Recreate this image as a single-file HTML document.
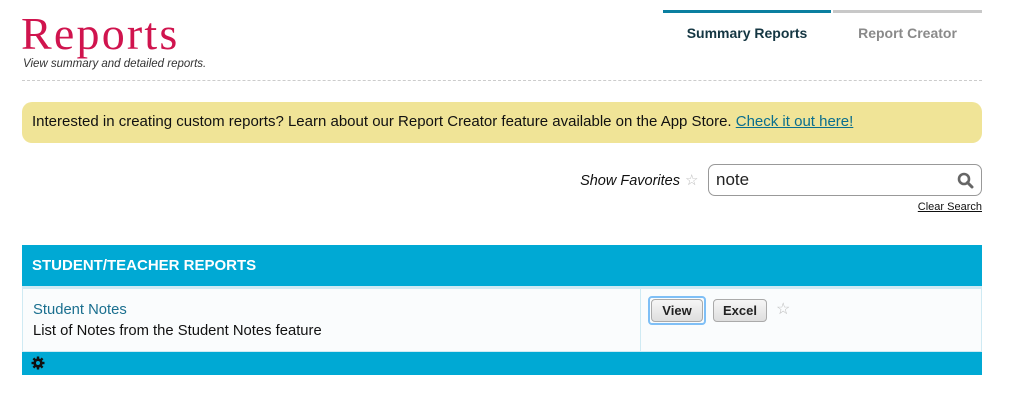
<!DOCTYPE html>
<html><head><meta charset="utf-8"><style>
*{margin:0;padding:0;box-sizing:border-box}
body{width:1009px;height:410px;background:#fff;font-family:"Liberation Sans",sans-serif;position:relative;overflow:hidden;color:#111}
.a{position:absolute}
</style></head><body>
<div class="a" style="left:21px;top:7px;font-family:'Liberation Serif',serif;font-size:46px;color:#d0144e;letter-spacing:2.2px">Reports</div>
<div class="a" style="left:23px;top:58px;font-size:11.5px;font-style:italic;color:#333">View summary and detailed reports.</div>
<div class="a" style="left:22px;top:80px;width:960px;border-top:1px dashed #ccc"></div>

<div class="a" style="left:663px;top:10px;width:168px;height:3px;background:#0a7fa0"></div>
<div class="a" style="left:833px;top:10px;width:149px;height:3px;background:#c8c8c8"></div>
<div class="a" style="left:663px;top:25px;width:168px;text-align:center;font-size:14px;font-weight:bold;color:#143642">Summary Reports</div>
<div class="a" style="left:833px;top:25px;width:149px;text-align:center;font-size:14px;font-weight:bold;color:#8a8a8a">Report Creator</div>

<div class="a" style="left:22px;top:102px;width:960px;height:41px;background:#f0e497;border-radius:10px"></div>
<div class="a" style="left:32px;top:113px;font-size:15px;color:#111">Interested in creating custom reports? Learn about our Report Creator feature available on the App Store. <span style="color:#0a6e8e;text-decoration:underline">Check it out here!</span></div>

<div class="a" style="left:560px;top:173px;width:120px;text-align:right;font-size:14.5px;font-style:italic;color:#111">Show Favorites</div>
<div class="a" style="left:685px;top:171px;font-size:15px;color:#bbb">☆</div>
<div class="a" style="left:708px;top:164px;width:274px;height:32px;border:1px solid #999;border-radius:7px"></div>
<div class="a" style="left:716px;top:170px;font-size:17px;color:#222">note</div>
<svg class="a" style="left:957px;top:172px" width="17" height="17" viewBox="0 0 17 17"><circle cx="7" cy="7" r="5" fill="none" stroke="#666" stroke-width="2.6"/><line x1="10.5" y1="10.5" x2="15" y2="15" stroke="#666" stroke-width="3" stroke-linecap="round"/></svg>
<div class="a" style="left:880px;top:201px;width:102px;text-align:right;font-size:11px;color:#111;text-decoration:underline">Clear Search</div>

<div class="a" style="left:22px;top:245px;width:960px;height:41px;background:#00a9d4"></div>
<div class="a" style="left:32px;top:257px;font-size:15px;font-weight:bold;color:#fff">STUDENT/TEACHER REPORTS</div>
<div class="a" style="left:22px;top:286px;width:960px;height:66px;background:#fafcfd;border:1px solid #cfeaf3;border-top:3px solid #cfeaf3"></div>
<div class="a" style="left:640px;top:289px;width:1px;height:62px;background:#cfeaf3"></div>
<div class="a" style="left:33px;top:302px;font-size:14.8px;color:#1a6f8f">Student Notes</div>
<div class="a" style="left:33px;top:323px;font-size:14.8px;color:#111">List of Notes from the Student Notes feature</div>
<div class="a" style="left:648px;top:296px;width:58px;height:29px;border:2px solid #7fbff6;border-radius:4px"></div>
<div class="a" style="left:651px;top:299px;width:52px;height:23px;background:linear-gradient(#f6f6f6,#dedede);border:1px solid #aaa;border-radius:4px;font-size:13px;font-weight:600;text-align:center;line-height:21px;color:#222">View</div>
<div class="a" style="left:713px;top:299px;width:54px;height:23px;background:linear-gradient(#f6f6f6,#dedede);border:1px solid #aaa;border-radius:4px;font-size:13px;font-weight:600;text-align:center;line-height:21px;color:#222">Excel</div>
<div class="a" style="left:776px;top:299px;font-size:16px;color:#bbb">☆</div>
<div class="a" style="left:22px;top:352px;width:960px;height:23px;background:#00a9d4"></div>
<svg class="a" style="left:31px;top:356px" width="14" height="14" viewBox="0 0 14 14"><g fill="#111"><circle cx="7" cy="7" r="4.6"/><g stroke="#111" stroke-width="2.4"><line x1="7" y1="0.5" x2="7" y2="13.5"/><line x1="0.5" y1="7" x2="13.5" y2="7"/><line x1="2.4" y1="2.4" x2="11.6" y2="11.6"/><line x1="11.6" y1="2.4" x2="2.4" y2="11.6"/></g></g><circle cx="7" cy="7" r="2" fill="#00a9d4"/></svg>
</body></html>
